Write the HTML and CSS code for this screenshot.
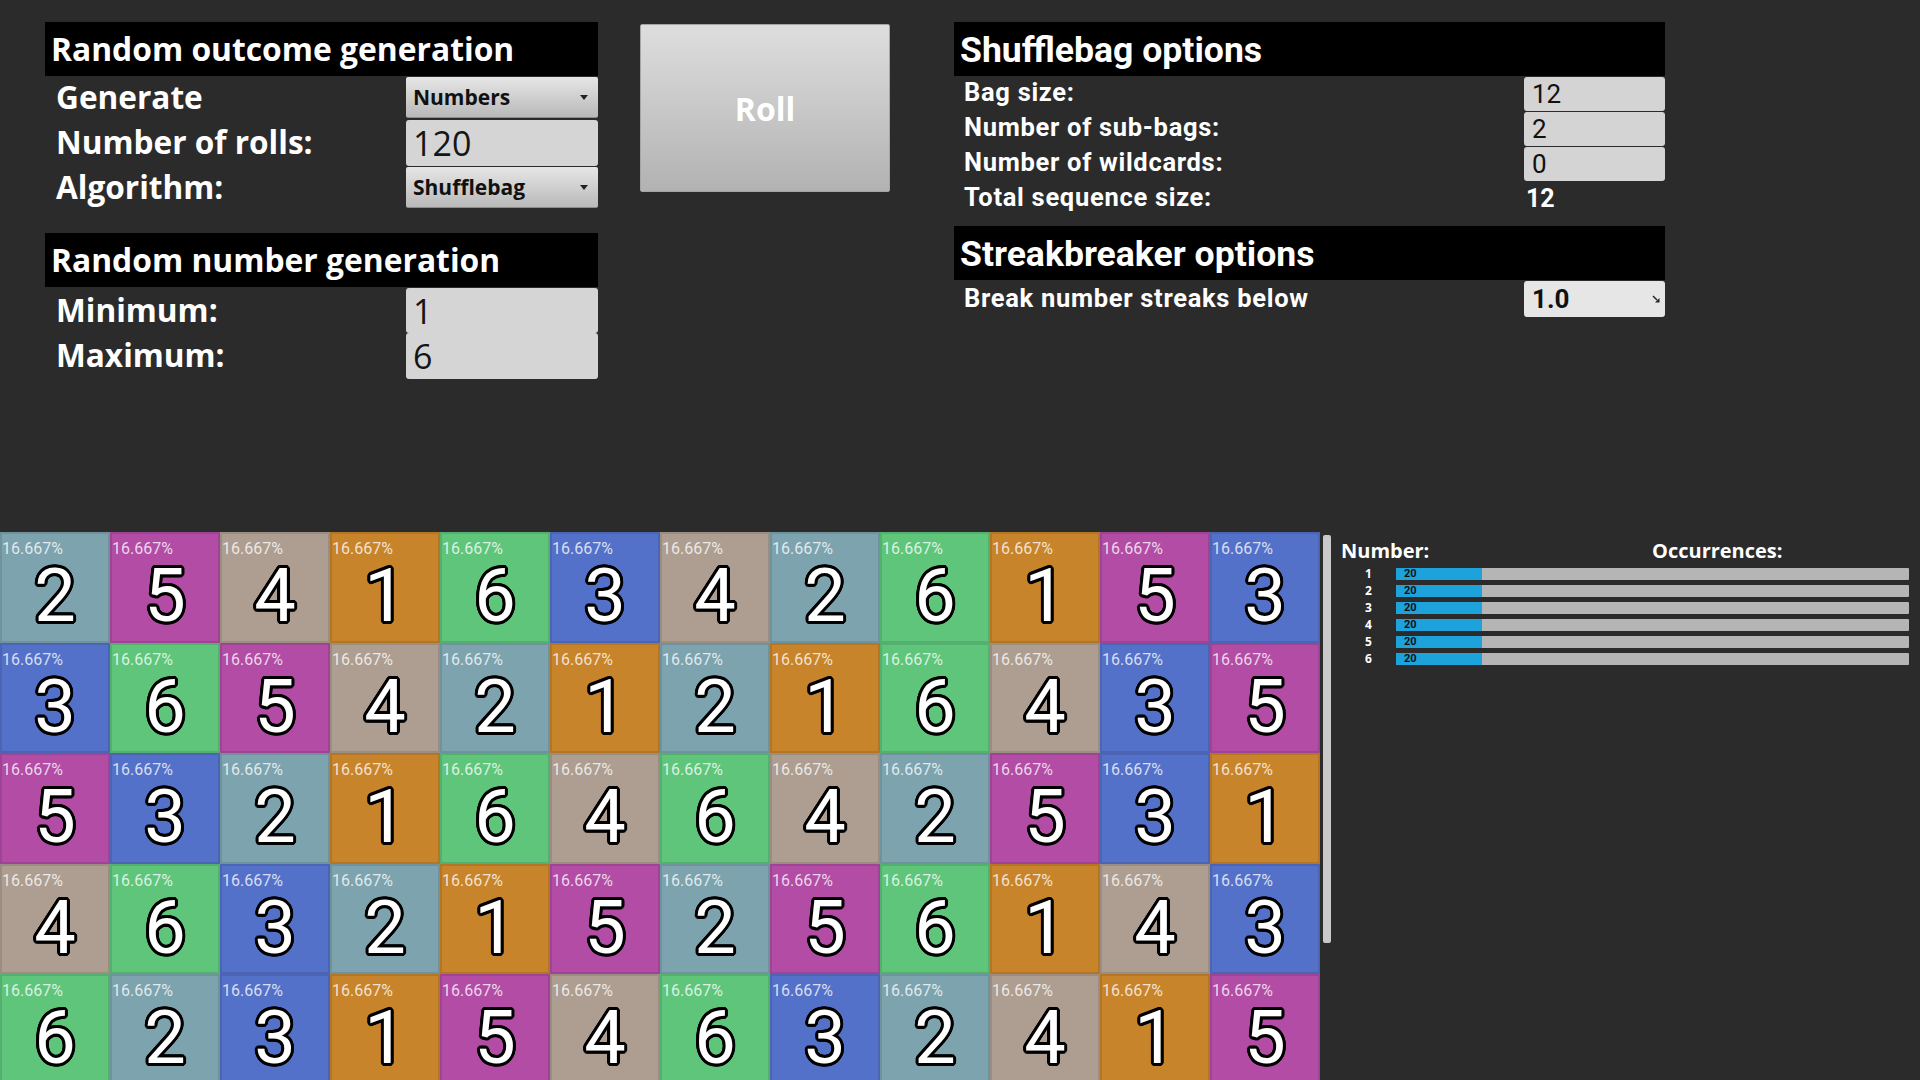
FILE: index.html
```html
<!DOCTYPE html>
<html>
<head>
<meta charset="utf-8">
<title>Random outcome generation</title>
<link rel="stylesheet" href="styles.css">
</head>
<body>
<div class="app">
  <div class="top">
    <section class="left-panel">
      <div class="hdr">Random outcome generation</div>
      <div class="row row-a"><span class="lbl">Generate</span><div class="dropdown"><span>Numbers</span><i class="caret"></i></div></div>
      <div class="row row-b"><span class="lbl">Number of rolls:</span><div class="input">120</div></div>
      <div class="row row-c"><span class="lbl">Algorithm:</span><div class="dropdown"><span>Shufflebag</span><i class="caret"></i></div></div>
      <div class="hdr hdr2">Random number generation</div>
      <div class="row row-min"><span class="lbl">Minimum:</span><div class="input">1</div></div>
      <div class="row row-max"><span class="lbl">Maximum:</span><div class="input">6</div></div>
    </section>
    <div class="roll">Roll</div>
    <section class="right-panel">
      <div class="rhdr">Shufflebag options</div>
      <div class="rrow"><span class="rlbl">Bag size:</span><div class="rinput">12</div></div>
      <div class="rrow"><span class="rlbl">Number of sub-bags:</span><div class="rinput">2</div></div>
      <div class="rrow"><span class="rlbl">Number of wildcards:</span><div class="rinput">0</div></div>
      <div class="rrow"><span class="rlbl">Total sequence size:</span><div class="rvalue">12</div></div>
      <div class="rhdr rhdr2">Streakbreaker options</div>
      <div class="rrow rrow-break"><span class="rlbl">Break number streaks below</span><div class="rinput spin"><span>1.0</span><svg class="spin-ico" width="8" height="8" viewBox="0 0 8 8"><path d="M1 1 L5 5" stroke="#222" stroke-width="1.4"/><path d="M7.5 3 L7.5 7.5 L3 7.5 Z" fill="#222"/></svg></div></div>
    </section>
  </div>
  <div class="bottom">
    <div class="grid">
      <div class="cell c2"><span class="pct">16.667%</span><span class="num">2</span></div>
      <div class="cell c5"><span class="pct">16.667%</span><span class="num">5</span></div>
      <div class="cell c4"><span class="pct">16.667%</span><span class="num">4</span></div>
      <div class="cell c1"><span class="pct">16.667%</span><span class="num">1</span></div>
      <div class="cell c6"><span class="pct">16.667%</span><span class="num">6</span></div>
      <div class="cell c3"><span class="pct">16.667%</span><span class="num">3</span></div>
      <div class="cell c4"><span class="pct">16.667%</span><span class="num">4</span></div>
      <div class="cell c2"><span class="pct">16.667%</span><span class="num">2</span></div>
      <div class="cell c6"><span class="pct">16.667%</span><span class="num">6</span></div>
      <div class="cell c1"><span class="pct">16.667%</span><span class="num">1</span></div>
      <div class="cell c5"><span class="pct">16.667%</span><span class="num">5</span></div>
      <div class="cell c3"><span class="pct">16.667%</span><span class="num">3</span></div>

      <div class="cell c3"><span class="pct">16.667%</span><span class="num">3</span></div>
      <div class="cell c6"><span class="pct">16.667%</span><span class="num">6</span></div>
      <div class="cell c5"><span class="pct">16.667%</span><span class="num">5</span></div>
      <div class="cell c4"><span class="pct">16.667%</span><span class="num">4</span></div>
      <div class="cell c2"><span class="pct">16.667%</span><span class="num">2</span></div>
      <div class="cell c1"><span class="pct">16.667%</span><span class="num">1</span></div>
      <div class="cell c2"><span class="pct">16.667%</span><span class="num">2</span></div>
      <div class="cell c1"><span class="pct">16.667%</span><span class="num">1</span></div>
      <div class="cell c6"><span class="pct">16.667%</span><span class="num">6</span></div>
      <div class="cell c4"><span class="pct">16.667%</span><span class="num">4</span></div>
      <div class="cell c3"><span class="pct">16.667%</span><span class="num">3</span></div>
      <div class="cell c5"><span class="pct">16.667%</span><span class="num">5</span></div>

      <div class="cell c5"><span class="pct">16.667%</span><span class="num">5</span></div>
      <div class="cell c3"><span class="pct">16.667%</span><span class="num">3</span></div>
      <div class="cell c2"><span class="pct">16.667%</span><span class="num">2</span></div>
      <div class="cell c1"><span class="pct">16.667%</span><span class="num">1</span></div>
      <div class="cell c6"><span class="pct">16.667%</span><span class="num">6</span></div>
      <div class="cell c4"><span class="pct">16.667%</span><span class="num">4</span></div>
      <div class="cell c6"><span class="pct">16.667%</span><span class="num">6</span></div>
      <div class="cell c4"><span class="pct">16.667%</span><span class="num">4</span></div>
      <div class="cell c2"><span class="pct">16.667%</span><span class="num">2</span></div>
      <div class="cell c5"><span class="pct">16.667%</span><span class="num">5</span></div>
      <div class="cell c3"><span class="pct">16.667%</span><span class="num">3</span></div>
      <div class="cell c1"><span class="pct">16.667%</span><span class="num">1</span></div>

      <div class="cell c4"><span class="pct">16.667%</span><span class="num">4</span></div>
      <div class="cell c6"><span class="pct">16.667%</span><span class="num">6</span></div>
      <div class="cell c3"><span class="pct">16.667%</span><span class="num">3</span></div>
      <div class="cell c2"><span class="pct">16.667%</span><span class="num">2</span></div>
      <div class="cell c1"><span class="pct">16.667%</span><span class="num">1</span></div>
      <div class="cell c5"><span class="pct">16.667%</span><span class="num">5</span></div>
      <div class="cell c2"><span class="pct">16.667%</span><span class="num">2</span></div>
      <div class="cell c5"><span class="pct">16.667%</span><span class="num">5</span></div>
      <div class="cell c6"><span class="pct">16.667%</span><span class="num">6</span></div>
      <div class="cell c1"><span class="pct">16.667%</span><span class="num">1</span></div>
      <div class="cell c4"><span class="pct">16.667%</span><span class="num">4</span></div>
      <div class="cell c3"><span class="pct">16.667%</span><span class="num">3</span></div>

      <div class="cell c6"><span class="pct">16.667%</span><span class="num">6</span></div>
      <div class="cell c2"><span class="pct">16.667%</span><span class="num">2</span></div>
      <div class="cell c3"><span class="pct">16.667%</span><span class="num">3</span></div>
      <div class="cell c1"><span class="pct">16.667%</span><span class="num">1</span></div>
      <div class="cell c5"><span class="pct">16.667%</span><span class="num">5</span></div>
      <div class="cell c4"><span class="pct">16.667%</span><span class="num">4</span></div>
      <div class="cell c6"><span class="pct">16.667%</span><span class="num">6</span></div>
      <div class="cell c3"><span class="pct">16.667%</span><span class="num">3</span></div>
      <div class="cell c2"><span class="pct">16.667%</span><span class="num">2</span></div>
      <div class="cell c4"><span class="pct">16.667%</span><span class="num">4</span></div>
      <div class="cell c1"><span class="pct">16.667%</span><span class="num">1</span></div>
      <div class="cell c5"><span class="pct">16.667%</span><span class="num">5</span></div>
    </div>
    <div class="scrollbar"></div>
    <section class="stats">
      <div class="stats-head"><span class="sh-num">Number:</span><span class="sh-occ">Occurrences:</span></div>
      <div class="srow"><span class="sn">1</span><div class="bar"><div class="fill" style="width:16.667%">20</div></div></div>
      <div class="srow"><span class="sn">2</span><div class="bar"><div class="fill" style="width:16.667%">20</div></div></div>
      <div class="srow"><span class="sn">3</span><div class="bar"><div class="fill" style="width:16.667%">20</div></div></div>
      <div class="srow"><span class="sn">4</span><div class="bar"><div class="fill" style="width:16.667%">20</div></div></div>
      <div class="srow"><span class="sn">5</span><div class="bar"><div class="fill" style="width:16.667%">20</div></div></div>
      <div class="srow"><span class="sn">6</span><div class="bar"><div class="fill" style="width:16.667%">20</div></div></div>
    </section>
  </div>
</div>
</body>
</html>
```

FILE: styles.css
```css
html, body {
  margin: 0;
  padding: 0;
  background: #2b2b2b;
}
body {
  width: 1920px;
  height: 1080px;
  overflow: hidden;
  font-family: "Open Sans", "Noto Sans", sans-serif;
  color: #fff;
}
.app {
  width: 1920px;
  height: 1080px;
  display: flex;
  flex-direction: column;
}
.top {
  height: 532px;
  box-sizing: border-box;
  padding: 22px 0 0 45px;
  display: flex;
  align-items: flex-start;
}

/* left panel */
.left-panel {
  width: 553px;
  display: flex;
  flex-direction: column;
}
.hdr {
  height: 54px;
  line-height: 54px;
  background: #000;
  font-weight: 700;
  font-size: 31.8px;
  padding-left: 6px;
  white-space: nowrap;
}
.hdr2 { margin-top: 25px; }
.row {
  display: flex;
  align-items: center;
}
.row-a { height: 41px; margin-top: 1px; }
.row-b { height: 46px; margin-top: 2px; }
.row-c { height: 41px; margin-top: 1px; }
.row-min { height: 45px; margin-top: 1px; }
.row-max { height: 46px; }
.lbl {
  flex: 1;
  padding-left: 11px;
  font-weight: 700;
  font-size: 31.6px;
  line-height: 40px;
  margin-top: -2px;
  white-space: nowrap;
}
.dropdown {
  width: 192px;
  height: 100%;
  box-sizing: border-box;
  background: linear-gradient(#e6e6e6, #d2d2d2 45%, #b9b9b9);
  border-radius: 2px;
  border-bottom: 1px solid #8c8c8c;
  display: flex;
  align-items: center;
  justify-content: space-between;
  padding: 0 10px 0 7px;
  color: #111;
  font-weight: 700;
  font-size: 21px;
}
.caret {
  width: 0;
  height: 0;
  border-left: 4px solid transparent;
  border-right: 4px solid transparent;
  border-top: 5px solid #222;
}
.input {
  width: 192px;
  height: 100%;
  box-sizing: border-box;
  background: #d5d5d5;
  border-radius: 3px;
  color: #151515;
  font-size: 34px;
  padding-left: 7px;
  display: flex;
  align-items: center;
}

/* roll */
.roll {
  width: 250px;
  height: 168px;
  box-sizing: border-box;
  margin: 2px 0 0 42px;
  background: linear-gradient(#dedede, #c8c8c8 50%, #b2b2b2);
  border: 1px solid #a5a5a5;
  border-radius: 2px;
  display: flex;
  align-items: center;
  justify-content: center;
  font-weight: 700;
  font-size: 32px;
  color: #fff;
}

/* right panel */
.right-panel {
  width: 711px;
  margin-left: 64px;
  display: flex;
  flex-direction: column;
  font-family: Roboto, "Open Sans", sans-serif;
}
.rhdr {
  height: 54px;
  line-height: 56px;
  background: #000;
  font-weight: 700;
  font-size: 35.6px;
  padding-left: 6px;
}
.rhdr2 { margin-top: 10px; height: 54px; }
.rrow {
  height: 35px;
  display: flex;
  align-items: center;
}
.rrow-break { height: 36px; margin-top: 1px; }
.rlbl {
  flex: 1;
  padding-left: 10px;
  font-weight: 700;
  font-size: 25.5px;
  letter-spacing: 0.7px;
  line-height: 30px;
  margin-top: -3px;
  white-space: nowrap;
}
.rinput {
  width: 141px;
  height: 34px;
  box-sizing: border-box;
  background: #d4d4d4;
  border-radius: 3px;
  color: #111;
  font-size: 26px;
  padding-left: 8px;
  display: flex;
  align-items: center;
}
.rvalue {
  width: 141px;
  box-sizing: border-box;
  padding-left: 2px;
  font-weight: 700;
  font-size: 25px;
}
.spin {
  height: 36px;
  background: #e6e6e6;
  font-weight: 700;
  justify-content: space-between;
  padding-right: 5px;
}
.spin-ico { display: block; }

/* bottom */
.bottom {
  height: 548px;
  display: flex;
  align-items: flex-start;
  overflow: hidden;
}
.grid {
  width: 1320px;
  display: grid;
  grid-template-columns: repeat(12, 110px);
  grid-auto-rows: 110.5px;
  flex-shrink: 0;
}
.cell {
  box-shadow: inset 0 0 0 2px rgba(0, 0, 0, 0.1);
  display: flex;
  flex-direction: column;
  align-items: center;
  font-family: Roboto, "Open Sans", sans-serif;
}
.pct {
  align-self: stretch;
  padding: 7px 0 0 2px;
  line-height: 19px;
  font-size: 16px;
  color: rgba(255, 255, 255, 0.78);
}
.num {
  margin-top: 1px;
  font-size: 74px;
  line-height: 74px;
  color: #fff;
  text-shadow:
    3px 0 0 #000, -3px 0 0 #000, 0 3px 0 #000, 0 -3px 0 #000,
    2.1px 2.1px 0 #000, -2.1px 2.1px 0 #000, 2.1px -2.1px 0 #000, -2.1px -2.1px 0 #000,
    2.8px 1.1px 0 #000, -2.8px 1.1px 0 #000, 2.8px -1.1px 0 #000, -2.8px -1.1px 0 #000,
    1.1px 2.8px 0 #000, -1.1px 2.8px 0 #000, 1.1px -2.8px 0 #000, -1.1px -2.8px 0 #000,
    0 0 1px #000;
}
.c1 { background: #c8842a; }
.c2 { background: #7ca3ae; }
.c3 { background: #5471c9; }
.c4 { background: #ad9e91; }
.c5 { background: #b24ca5; }
.c6 { background: #5ec57b; }

.scrollbar {
  width: 8px;
  height: 408px;
  margin: 3px 0 0 3px;
  background: #c9c9c9;
  border-radius: 2px;
  flex-shrink: 0;
}
.stats {
  margin-left: 10px;
  width: 568px;
  display: flex;
  flex-direction: column;
}
.stats-head {
  margin-top: 8px;
  height: 22px;
  line-height: 22px;
  display: flex;
  font-weight: 700;
  font-size: 20px;
  margin-bottom: 3px;
}
.sh-num { width: 311px; }
.srow {
  height: 17.1px;
  display: flex;
  align-items: center;
}
.sn {
  width: 55px;
  box-sizing: border-box;
  padding-left: 24px;
  font-weight: 700;
  font-size: 12px;
  line-height: 12px;
}
.bar {
  width: 513px;
  height: 12px;
  background: #b5b5b5;
  border-radius: 1px;
  overflow: hidden;
}
.fill {
  height: 100%;
  background: #1ea2dc;
  font-family: Roboto, sans-serif;
  font-weight: 700;
  font-size: 11px;
  line-height: 12px;
  color: #111;
  padding-left: 8px;
  box-sizing: border-box;
}
```
